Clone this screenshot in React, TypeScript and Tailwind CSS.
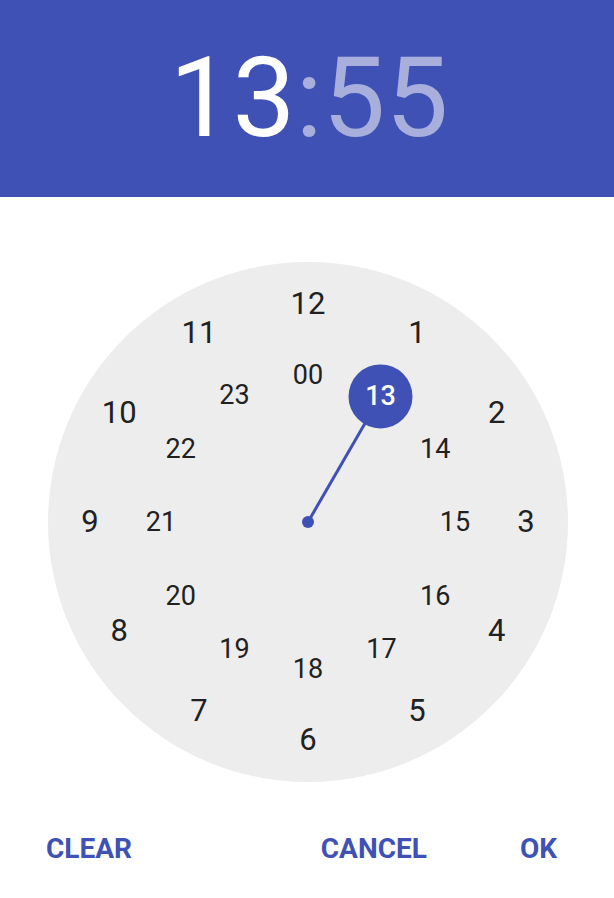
import React from 'react';

const CX = 260;
const CY = 260;
const OUTER_R = 218;
const INNER_R = 147;

const outer = [12, 1, 2, 3, 4, 5, 6, 7, 8, 9, 10, 11];
const inner = ['00', '13', '14', '15', '16', '17', '18', '19', '20', '21', '22', '23'];

function pos(i: number, r: number) {
  const a = (i * 30 * Math.PI) / 180;
  return { left: CX + r * Math.sin(a), top: CY - r * Math.cos(a) };
}

export default function App() {
  const sel = pos(1, 145);

  return (
    <div className="w-[614px] h-[898px] bg-white flex flex-col" style={{ fontFamily: 'Roboto, sans-serif' }}>
      {/* Header */}
      <div className="h-[197px] bg-[#3f51b5] flex items-center justify-center">
        <div className="text-[112px] leading-none tracking-normal pl-[4px] pb-[2px]">
          <span className="text-white">13</span>
          <span className="text-[#a8afdc]">:55</span>
        </div>
      </div>

      {/* Clock */}
      <div className="flex justify-center pt-[65px] pl-[2px]">
        <div className="relative w-[520px] h-[520px] rounded-full bg-[#ededed]">
          <svg className="absolute inset-0" width="520" height="520" viewBox="0 0 520 520">
            <line x1={CX} y1={CY} x2={sel.left} y2={sel.top} stroke="#3f51b5" strokeWidth="3" />
            <circle cx={CX} cy={CY} r="6" fill="#3f51b5" />
            <circle cx={sel.left} cy={sel.top} r="32" fill="#3f51b5" />
          </svg>
          {outer.map((n, i) => {
            const p = pos(i, OUTER_R);
            return (
              <span
                key={'o' + n}
                className="absolute -translate-x-1/2 -translate-y-1/2 text-[31px] leading-none text-[#212121]"
                style={{ left: p.left, top: p.top - 1 }}
              >
                {n}
              </span>
            );
          })}
          {inner.map((n, i) => {
            const p = pos(i, i === 1 ? 145 : INNER_R);
            return (
              <span
                key={'i' + n}
                className={
                  'absolute -translate-x-1/2 -translate-y-1/2 text-[27px] leading-none ' +
                  (i === 1 ? 'text-white font-medium' : 'text-[#212121]')
                }
                style={{ left: p.left, top: p.top }}
              >
                {n}
              </span>
            );
          })}
        </div>
      </div>

      {/* Actions */}
      <div className="flex items-center pl-[46px] pr-[57px] pt-[53px] text-[28px] font-bold text-[#3f51b5] leading-none">
        <button className="leading-none">CLEAR</button>
        <div className="flex-1" />
        <button className="leading-none mr-[93px]">CANCEL</button>
        <button className="leading-none">OK</button>
      </div>
    </div>
  );
}
